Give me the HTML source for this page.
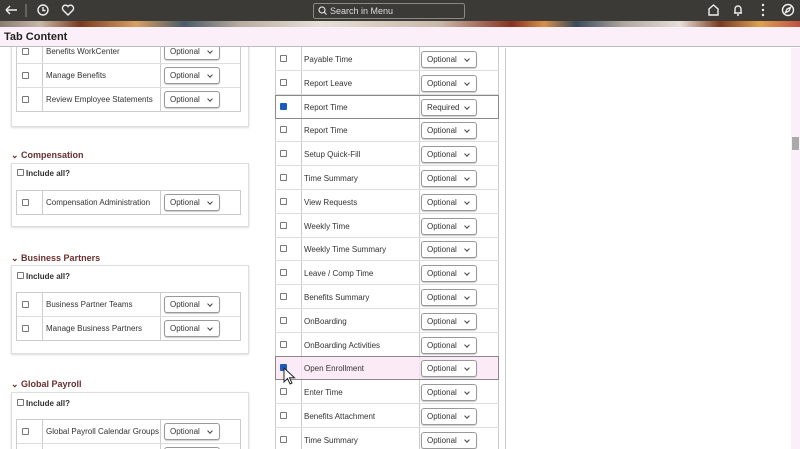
<!DOCTYPE html>
<html style="overflow:hidden;width:800px;height:449px"><head><meta charset="utf-8"><style>
*{box-sizing:border-box;margin:0;padding:0}
body{width:800px;height:449px;overflow:hidden;background:#fff;font-family:"Liberation Sans",sans-serif;position:relative;color:#333}
.a{position:absolute}
.top{left:0;top:0;width:800px;height:21px;background:#3b3a36}
.strip{left:0;top:21px;width:800px;height:6px;background:linear-gradient(90deg,#8a7a70 0,#c7b8a8 5%,#7a3a20 10%,#d8a060 17%,#4a5a68 23%,#b8aca0 30%,#e8e0d8 40%,#c8b8a8 55%,#8a3020 64%,#d89048 68%,#3a4a5a 72%,#b0a8a0 78%,#e8e0d8 85%,#7a3a20 90%,#e0a050 95%,#c05040 100%)}
.tab{left:0;top:27px;width:800px;height:20px;background:#fbf0fa;border-bottom:1px solid #bbb;font-weight:bold;font-size:11px;padding:4px 0 0 4px;color:#222;z-index:5}
.box{border:1px solid #ddd;box-shadow:0 1px 2px #ddd}
.tr{border:1px solid #ccc}
.row{position:absolute;height:24px;border-bottom:1px solid #ddd;font-size:8px;color:#333}
.cb{position:absolute;width:7px;height:7px;border:1px solid #777;border-radius:1px;background:#fff}
.cb.on{background:#1a5bbf;border-color:#1a5bbf}
.sel{position:absolute;width:56px;height:17px;border:1px solid #999;border-radius:3px;font-size:8px;padding:3px 0 0 5px;background:#fff;box-shadow:0 1px 1px #ccc}
.sel:after{content:"";position:absolute;right:7px;top:5px;width:3px;height:3px;border-right:1.3px solid #444;border-bottom:1.3px solid #444;transform:rotate(45deg)}
.vl{position:absolute;top:0;width:1px;height:100%;background:#ccc}
.h{position:absolute;font-size:9px;font-weight:bold;color:#6b2f2f}
.inc{position:absolute;font-size:8px;font-weight:bold;color:#333}
</style></head><body>
<div class="a top"></div>
<svg class="a" style="left:0;top:0" width="800" height="21">
<g stroke="#eee" stroke-width="1.4" fill="none">
<path d="M6 10H17M6 10l4-4M6 10l4 4"/>
<line x1="26" y1="4" x2="26" y2="17" stroke="#777"/>
<circle cx="43" cy="10" r="5"/><path d="M43 7v3.5h2.5"/>
<path d="M68 15l-5-5a3 3 0 0 1 5-3.5a3 3 0 0 1 5 3.5z"/>
<path d="M709 15V9l4.5-4 4.5 4v6z"/>
<path d="M734 13h8M735 13V9a3 3 0 0 1 6 0v4M737 15h2"/>
<circle cx="788" cy="10" r="5.5"/><path d="M785.5 12.5l1.5-3.5 3.5-1.5-1.5 3.5z"/>
</g>
<g fill="#eee"><circle cx="763" cy="5" r="1.2"/><circle cx="763" cy="10" r="1.2"/><circle cx="763" cy="15" r="1.2"/></g>
<rect x="313.5" y="3.5" width="151" height="15" rx="2" fill="#3b3a36" stroke="#8a8a85"/>
<circle cx="322" cy="10" r="3" stroke="#ddd" fill="none" stroke-width="1.2"/><path d="M324 12l2.5 2.5" stroke="#ddd" stroke-width="1.2"/>
<text x="330" y="14" font-family="Liberation Sans" font-size="9" fill="#ddd">Search in Menu</text>
</svg>
<div class="a strip"></div>
<div class="a tab">Tab Content</div>

<div class="a" style="left:791px;top:48px;width:9px;height:401px;background:#fbf0fa"></div>
<div class="a" style="left:792px;top:137px;width:7px;height:13px;background:#aaa"></div>
<div class="a" style="left:505px;top:48px;width:1px;height:401px;background:#ccc"></div>

<div class="a box" style="left:11px;top:38px;width:238px;height:89px;border-top:none"></div>
<div class="a" style="left:16px;top:40px;width:225px;height:72px;border:1px solid #ccc;border-top:none">
 <div class="vl" style="left:25px"></div><div class="vl" style="left:143px"></div>
 <div class="row" style="left:0;top:0;width:223px"><span class="cb" style="left:5px;top:8px"></span><span class="a" style="left:29px;top:7px">Benefits WorkCenter</span><span class="sel" style="left:147px;top:3px">Optional</span></div>
 <div class="row" style="left:0;top:24px;width:223px"><span class="cb" style="left:5px;top:8px"></span><span class="a" style="left:29px;top:7px">Manage Benefits</span><span class="sel" style="left:147px;top:3px">Optional</span></div>
 <div class="row" style="left:0;top:48px;width:223px;border:none"><span class="cb" style="left:5px;top:8px"></span><span class="a" style="left:29px;top:7px">Review Employee Statements</span><span class="sel" style="left:147px;top:3px">Optional</span></div>
</div>

<div class="h" style="left:11px;top:150px">⌄ Compensation</div>
<div class="a box" style="left:11px;top:163px;width:238px;height:64px"></div>
<span class="cb" style="left:17px;top:169px"></span><span class="inc" style="left:26px;top:169px">Include all?</span>
<div class="a tr" style="left:16px;top:190px;width:225px;height:25px">
 <div class="vl" style="left:25px"></div><div class="vl" style="left:143px"></div>
 <span class="cb" style="left:5px;top:8px"></span><span class="a" style="left:29px;top:7px;font-size:8px">Compensation Administration</span><span class="sel" style="left:147px;top:3px">Optional</span>
</div>

<div class="h" style="left:11px;top:253px">⌄ Business Partners</div>
<div class="a box" style="left:11px;top:265px;width:238px;height:89px"></div>
<span class="cb" style="left:17px;top:272px"></span><span class="inc" style="left:26px;top:272px">Include all?</span>
<div class="a tr" style="left:16px;top:292px;width:225px;height:49px">
 <div class="vl" style="left:25px"></div><div class="vl" style="left:143px"></div>
 <div class="row" style="left:0;top:0;width:223px"><span class="cb" style="left:5px;top:8px"></span><span class="a" style="left:29px;top:7px">Business Partner Teams</span><span class="sel" style="left:147px;top:3px">Optional</span></div>
 <div class="row" style="left:0;top:24px;width:223px;border:none"><span class="cb" style="left:5px;top:8px"></span><span class="a" style="left:29px;top:7px">Manage Business Partners</span><span class="sel" style="left:147px;top:3px">Optional</span></div>
</div>

<div class="h" style="left:11px;top:379px">⌄ Global Payroll</div>
<div class="a box" style="left:11px;top:392px;width:238px;height:70px"></div>
<span class="cb" style="left:17px;top:399px"></span><span class="inc" style="left:26px;top:399px">Include all?</span>
<div class="a tr" style="left:16px;top:419px;width:225px;height:40px">
 <div class="vl" style="left:25px"></div><div class="vl" style="left:143px"></div>
 <div class="row" style="left:0;top:0;width:223px"><span class="cb" style="left:5px;top:8px"></span><span class="a" style="left:29px;top:7px">Global Payroll Calendar Groups</span><span class="sel" style="left:147px;top:3px">Optional</span></div>
 <span class="sel" style="left:147px;top:27px"></span>
</div>

<div class="a" style="left:275px;top:47px;width:224px;height:402px;border-left:1px solid #ccc;border-right:1px solid #ccc">
 <div class="vl" style="left:25px"></div><div class="vl" style="left:143px"></div>
</div>
<div class="a" style="left:275px;top:47px;width:224px">
 <div class="row" style="top:0px;width:224px"><span class="cb" style="left:5px;top:8px"></span><span class="a" style="left:29px;top:8px">Payable Time</span><span class="sel" style="left:146px;top:4px">Optional</span></div>
 <div class="row" style="top:23.8px;width:224px"><span class="cb" style="left:5px;top:8px"></span><span class="a" style="left:29px;top:8px">Report Leave</span><span class="sel" style="left:146px;top:4px">Optional</span></div>
 <div class="row" style="top:47.6px;width:224px;border:1px solid #888"><span class="cb on" style="left:4px;top:7px"></span><span class="a" style="left:28px;top:7px">Report Time</span><span class="sel" style="left:145px;top:3px">Required</span></div>
 <div class="row" style="top:71.4px;width:224px"><span class="cb" style="left:5px;top:8px"></span><span class="a" style="left:29px;top:8px">Report Time</span><span class="sel" style="left:146px;top:4px">Optional</span></div>
 <div class="row" style="top:95.2px;width:224px"><span class="cb" style="left:5px;top:8px"></span><span class="a" style="left:29px;top:8px">Setup Quick-Fill</span><span class="sel" style="left:146px;top:4px">Optional</span></div>
 <div class="row" style="top:119px;width:224px"><span class="cb" style="left:5px;top:8px"></span><span class="a" style="left:29px;top:8px">Time Summary</span><span class="sel" style="left:146px;top:4px">Optional</span></div>
 <div class="row" style="top:142.8px;width:224px"><span class="cb" style="left:5px;top:8px"></span><span class="a" style="left:29px;top:8px">View Requests</span><span class="sel" style="left:146px;top:4px">Optional</span></div>
 <div class="row" style="top:166.6px;width:224px"><span class="cb" style="left:5px;top:8px"></span><span class="a" style="left:29px;top:8px">Weekly Time</span><span class="sel" style="left:146px;top:4px">Optional</span></div>
 <div class="row" style="top:190.4px;width:224px"><span class="cb" style="left:5px;top:8px"></span><span class="a" style="left:29px;top:8px">Weekly Time Summary</span><span class="sel" style="left:146px;top:4px">Optional</span></div>
 <div class="row" style="top:214.2px;width:224px"><span class="cb" style="left:5px;top:8px"></span><span class="a" style="left:29px;top:8px">Leave / Comp Time</span><span class="sel" style="left:146px;top:4px">Optional</span></div>
 <div class="row" style="top:238px;width:224px"><span class="cb" style="left:5px;top:8px"></span><span class="a" style="left:29px;top:8px">Benefits Summary</span><span class="sel" style="left:146px;top:4px">Optional</span></div>
 <div class="row" style="top:261.8px;width:224px"><span class="cb" style="left:5px;top:8px"></span><span class="a" style="left:29px;top:8px">OnBoarding</span><span class="sel" style="left:146px;top:4px">Optional</span></div>
 <div class="row" style="top:285.6px;width:224px"><span class="cb" style="left:5px;top:8px"></span><span class="a" style="left:29px;top:8px">OnBoarding Activities</span><span class="sel" style="left:146px;top:4px">Optional</span></div>
 <div class="row" style="top:309.4px;width:224px;border:1px solid #888;background:rgba(250,230,245,.8)"><span class="cb on" style="left:4px;top:7px"></span><span class="a" style="left:28px;top:7px">Open Enrollment</span><span class="sel" style="left:145px;top:3px">Optional</span></div>
 <div class="row" style="top:333.2px;width:224px"><span class="cb" style="left:5px;top:8px"></span><span class="a" style="left:29px;top:8px">Enter Time</span><span class="sel" style="left:146px;top:4px">Optional</span></div>
 <div class="row" style="top:357px;width:224px"><span class="cb" style="left:5px;top:8px"></span><span class="a" style="left:29px;top:8px">Benefits Attachment</span><span class="sel" style="left:146px;top:4px">Optional</span></div>
 <div class="row" style="top:380.8px;width:224px"><span class="cb" style="left:5px;top:8px"></span><span class="a" style="left:29px;top:8px">Time Summary</span><span class="sel" style="left:146px;top:4px">Optional</span></div>
</div>
<svg class="a" style="left:282px;top:367px" width="14" height="20"><path d="M2 1v14l3.5-3.5 2.5 5.5 2-1-2.5-5.2h5z" fill="#fff" stroke="#222" stroke-width="1"/></svg>
</body></html>
